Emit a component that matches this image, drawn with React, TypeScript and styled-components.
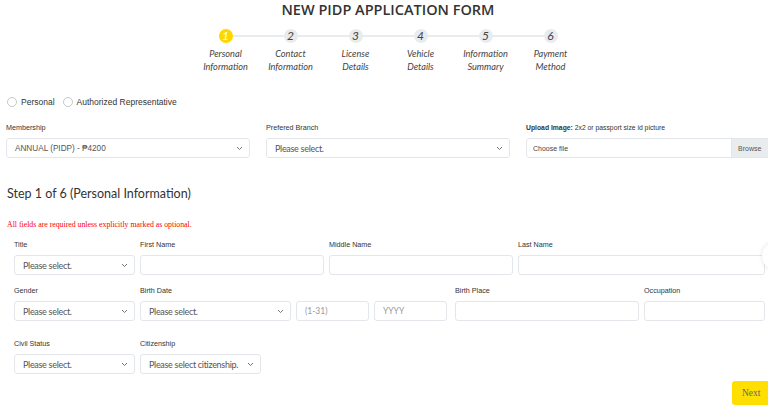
import React from 'react';
import styled, { createGlobalStyle } from 'styled-components';

const GlobalStyle = createGlobalStyle`
    html, body {
        margin: 0;
        padding: 0;
        background: #fff;
        overflow: hidden;
    }
    body {
        font-family: "Liberation Sans", Arial, sans-serif;
        color: #333;
    }
`;

const uiFont = `Lato, "Open Sans", sans-serif`;

const steps = [
    ['Personal', 'Information'],
    ['Contact', 'Information'],
    ['License', 'Details'],
    ['Vehicle', 'Details'],
    ['Information', 'Summary'],
    ['Payment', 'Method'],
];

const Chevron = () => (
    <svg width="7" height="5" viewBox="0 0 7 5">
        <path d="M1 1l2.5 2.5L6 1" fill="none" stroke="#666" strokeWidth="0.9" />
    </svg>
);

const Select = ({ text }: { text: string }) => (
    <SelectBox>
        <span>{text}</span>
        <Chevron />
    </SelectBox>
);

export default function App() {
    return (
        <Page>
            <GlobalStyle />
            <Title>NEW PIDP APPLICATION FORM</Title>

            <Stepper>
                {steps.map((s, i) => (
                    <Step key={i}>
                        <Dot active={i === 0}>{i + 1}</Dot>
                        <StepLabel>{s[0]}<br />{s[1]}</StepLabel>
                    </Step>
                ))}
            </Stepper>

            <RadioRow>
                <RadioItem><Radio />Personal</RadioItem>
                <RadioItem><Radio />Authorized Representative</RadioItem>
            </RadioRow>

            <TopGrid>
                <Field>
                    <Label>Membership</Label>
                    <SelectBox dark>
                        <span>ANNUAL (PIDP) - ₱4200</span>
                        <Chevron />
                    </SelectBox>
                </Field>
                <Field>
                    <Label>Prefered Branch</Label>
                    <Select text="Please select." />
                </Field>
                <Field>
                    <Label small><b>Upload Image:</b> 2x2 or passport size id picture</Label>
                    <FileBox>
                        <span>Choose file</span>
                        <BrowseBtn>Browse</BrowseBtn>
                    </FileBox>
                </Field>
            </TopGrid>

            <StepHeading>Step 1 of 6 (Personal Information)</StepHeading>
            <Notice>All fields are required unless explicitly marked as optional.</Notice>

            <FormGrid gap={10}>
                <Field span={2}><Label>Title</Label><Select text="Please select." /></Field>
                <Field span={3}><Label>First Name</Label><Input /></Field>
                <Field span={3}><Label>Middle Name</Label><Input /></Field>
                <Field span={4}><Label>Last Name</Label><Input /></Field>
            </FormGrid>

            <FormGrid gap={11}>
                <Field span={2}><Label>Gender</Label><Select text="Please select." /></Field>
                <Field span={5}>
                    <Label>Birth Date</Label>
                    <DateRow>
                        <Select text="Please select." />
                        <Input placeholder="(1-31)" />
                        <Input placeholder="YYYY" />
                    </DateRow>
                </Field>
                <Field span={3}><Label>Birth Place</Label><Input /></Field>
                <Field span={2}><Label>Occupation</Label><Input /></Field>
            </FormGrid>

            <FormGrid gap={18}>
                <Field span={2}><Label>Civil Status</Label><Select text="Please select." /></Field>
                <Field span={2}><Label>Citizenship</Label><Select text="Please select citizenship." /></Field>
            </FormGrid>

            <Footer>
                <NextButton>Next</NextButton>
            </Footer>

            <FloatCircle />
        </Page>
    );
}

const Page = styled.div`
    position: relative;
    width: 776px;
    height: 416px;
    overflow: hidden;
`;

const Title = styled.h1`
    margin: 0;
    text-align: center;
    font-family: "Open Sans", sans-serif;
    font-size: 14.5px;
    font-weight: 600;
    line-height: 20px;
    color: #333;
`;

const Stepper = styled.div`
    position: relative;
    display: flex;
    justify-content: center;
    margin-top: 9px;

    &::before {
        content: '';
        position: absolute;
        top: 6px;
        left: 227px;
        width: 324px;
        height: 2px;
        background: #e9ecef;
    }
`;

const Step = styled.div`
    position: relative;
    width: 65px;
    display: flex;
    flex-direction: column;
    align-items: center;
`;

const Dot = styled.div<{ active?: boolean }>`
    width: 14px;
    height: 14px;
    border-radius: 50%;
    background: ${p => (p.active ? '#ffd600' : '#e9ecef')};
    color: ${p => (p.active ? '#fff' : '#444')};
    font-family: ${uiFont};
    font-style: italic;
    font-size: 12px;
    line-height: 14px;
    text-align: center;
`;

const StepLabel = styled.div`
    margin-top: 4px;
    font-family: ${uiFont};
    font-style: italic;
    font-size: 9.2px;
    line-height: 13px;
    color: #444;
    text-align: center;
    white-space: nowrap;
`;

const RadioRow = styled.div`
    display: flex;
    gap: 8px;
    padding-left: 7px;
    margin-top: 23px;
`;

const RadioItem = styled.label`
    display: flex;
    align-items: center;
    gap: 4px;
    font-size: 8.5px;
    line-height: 12px;
    color: #333;
`;

const Radio = styled.span`
    width: 8px;
    height: 8px;
    border: 1px solid #c4c8cc;
    border-radius: 50%;
    background: #fff;
`;

const TopGrid = styled.div`
    display: grid;
    grid-template-columns: repeat(3, 244px);
    column-gap: 16px;
    padding-left: 6px;
    margin-top: 15px;
`;

const Field = styled.div<{ span?: number }>`
    display: flex;
    flex-direction: column;
    min-width: 0;
    grid-column: span ${p => p.span ?? 1};
`;

const Label = styled.div<{ small?: boolean }>`
    font-size: ${p => (p.small ? '6.8px' : '7.2px')};
    line-height: 10px;
    color: #333;
    margin-bottom: 5px;
    white-space: nowrap;

    b {
        font-weight: bold;
    }
`;

const SelectBox = styled.div<{ dark?: boolean }>`
    height: 20px;
    box-sizing: border-box;
    border: 1px solid #e3e6ea;
    border-radius: 3px;
    background: #fff;
    display: flex;
    align-items: center;
    justify-content: space-between;
    padding: 0 6px 0 8px;
    font-family: ${p => (p.dark ? '"Liberation Sans", Arial, sans-serif' : uiFont)};
    font-size: ${p => (p.dark ? '8.2px' : '9px')};
    letter-spacing: ${p => (p.dark ? '0' : '-0.3px')};
    color: #555;
    white-space: nowrap;
    overflow: hidden;
`;

const FileBox = styled.div`
    height: 20px;
    box-sizing: border-box;
    border: 1px solid #e3e6ea;
    border-radius: 3px;
    display: flex;
    align-items: stretch;
    justify-content: space-between;
    font-size: 7px;
    color: #444;

    & > span {
        display: flex;
        align-items: center;
        padding-left: 6px;
    }
`;

const BrowseBtn = styled.span`
    display: flex;
    align-items: center;
    padding: 0 4px;
    width: 27px;
    background: #e9ecef;
    border-left: 1px solid #e3e6ea;
    color: #555;
`;

const StepHeading = styled.h2`
    margin: 27px 0 0 7px;
    font-family: ${uiFont};
    font-weight: 400;
    font-size: 12.5px;
    line-height: 18px;
    color: #333;
`;

const Notice = styled.p`
    margin: 17px 0 0 7px;
    font-family: "Liberation Serif", "Times New Roman", serif;
    font-size: 7.8px;
    line-height: 10px;
    color: #f00;
`;

const FormGrid = styled.div<{ gap: number }>`
    display: grid;
    grid-template-columns: repeat(12, 58px);
    column-gap: 5px;
    padding-left: 14px;
    margin-top: ${p => p.gap}px;
`;

const Input = styled.input`
    height: 20px;
    box-sizing: border-box;
    border: 1px solid #e3e6ea;
    border-radius: 3px;
    padding: 0 8px;
    font-family: ${uiFont};
    font-size: 8.5px;
    color: #555;
    min-width: 0;
    outline: none;

    &::placeholder {
        color: #999;
    }
`;

const DateRow = styled.div`
    display: grid;
    grid-template-columns: 151px 73px 73px;
    column-gap: 5px;
`;

const Footer = styled.div`
    display: flex;
    justify-content: flex-end;
    margin-top: 7px;
`;

const NextButton = styled.button`
    width: 44px;
    height: 24px;
    border: none;
    border-radius: 3px;
    background: #ffdf00;
    font-family: "Liberation Serif", "Times New Roman", serif;
    font-size: 9.5px;
    color: #666;
    text-align: left;
    padding-left: 10px;
`;

const FloatCircle = styled.div`
    position: absolute;
    left: 762px;
    top: 242px;
    width: 28px;
    height: 28px;
    border-radius: 50%;
    background: #fff;
    box-shadow: 0 0 4px rgba(0, 0, 0, 0.12);
`;
